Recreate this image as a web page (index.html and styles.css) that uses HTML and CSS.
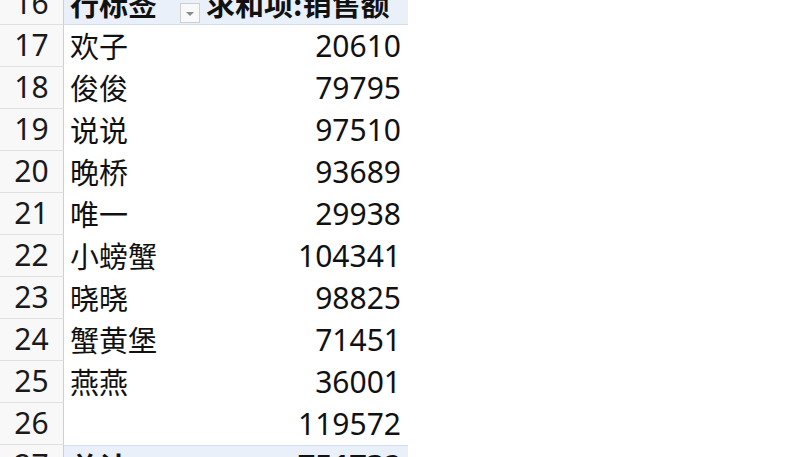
FILE: index.html
```html
<!DOCTYPE html>
<html lang="zh-CN">
<head>
<meta charset="utf-8">
<link rel="stylesheet" href="styles.css">
</head>
<body>
<div class="sheet">
  <div class="rh rh-top">16</div>
  <div class="c head a">行标签<span class="filter"><span class="tri"></span></span></div>
  <div class="c head b-left">求和项:销售额</div>

  <div class="rh">17</div><div class="c a">欢子</div><div class="c num">20610</div>
  <div class="rh">18</div><div class="c a">俊俊</div><div class="c num">79795</div>
  <div class="rh">19</div><div class="c a">说说</div><div class="c num">97510</div>
  <div class="rh">20</div><div class="c a">晚桥</div><div class="c num">93689</div>
  <div class="rh">21</div><div class="c a">唯一</div><div class="c num">29938</div>
  <div class="rh">22</div><div class="c a">小螃蟹</div><div class="c num">104341</div>
  <div class="rh">23</div><div class="c a">晓晓</div><div class="c num">98825</div>
  <div class="rh">24</div><div class="c a">蟹黄堡</div><div class="c num">71451</div>
  <div class="rh">25</div><div class="c a">燕燕</div><div class="c num">36001</div>
  <div class="rh">26</div><div class="c a"></div><div class="c num">119572</div>

  <div class="rh">27</div><div class="c total a">总计</div><div class="c total num">751732</div>
</div>
</body>
</html>
```

FILE: styles.css
```css
html, body {
  margin: 0;
  padding: 0;
  background: #ffffff;
  overflow: hidden;
}

body {
  width: 812px;
  height: 457px;
  font-family: "Noto Sans", "Noto Sans CJK SC", sans-serif;
  font-size: 29px;
  color: #111111;
}

.sheet {
  display: grid;
  grid-template-columns: 64px 137px 207px;
  grid-auto-rows: 42px;
  margin-top: -17px;
}

.rh {
  box-sizing: border-box;
  display: flex;
  align-items: center;
  justify-content: center;
  padding-bottom: 2px;
  background: #f8f8f8;
  border-right: 1px solid #d0d0d0;
  border-bottom: 1px solid #e0e0e0;
  color: #1a1a1a;
  font-size: 30px;
}

.c {
  box-sizing: border-box;
  display: flex;
  align-items: center;
  padding-bottom: 2px;
  white-space: nowrap;
  background: #ffffff;
}

.a {
  padding-left: 6px;
  position: relative;
}

.b-left {
  padding-left: 5px;
}

.num {
  justify-content: flex-end;
  padding-right: 7px;
  font-size: 30px;
}

.head {
  background: #eaf0f9;
  border-bottom: 1px solid #d3ddec;
  font-weight: 700;
  font-family: "Noto Sans CJK SC", sans-serif;
}

.total {
  background: #eaf0f9;
  border-top: 1px solid #d3ddec;
  font-weight: 700;
}

.total.a {
  font-family: "Noto Sans CJK SC", sans-serif;
}

.filter {
  position: absolute;
  right: 1px;
  bottom: 1px;
  width: 20px;
  height: 20px;
  box-sizing: border-box;
  border: 1px solid #cfcfcf;
  background: #f9f9f9;
  display: flex;
  align-items: center;
  justify-content: center;
}

.tri {
  width: 0;
  height: 0;
  border-left: 4px solid transparent;
  border-right: 4px solid transparent;
  border-top: 4px solid #8a8a8a;
  margin-top: 2px;
}
```
